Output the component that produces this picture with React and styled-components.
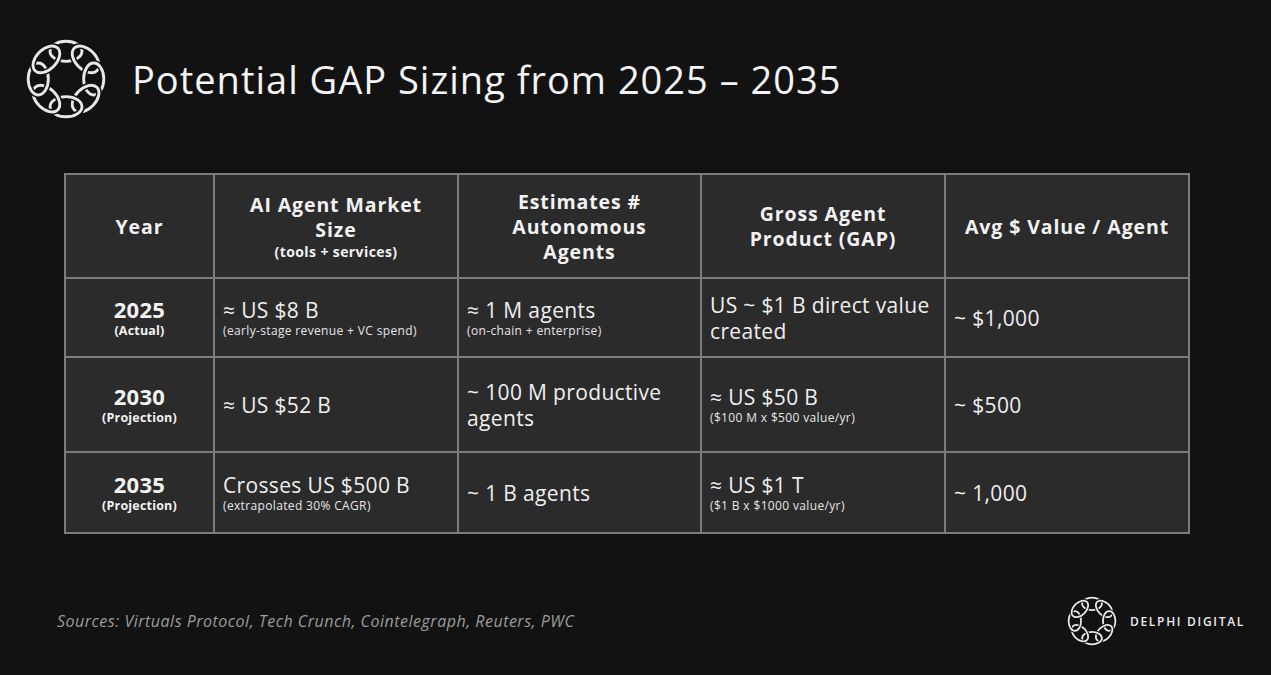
import React from "react"
import styled, { createGlobalStyle } from "styled-components"

const GlobalStyle = createGlobalStyle`
  html, body {
    margin: 0;
    padding: 0;
    background: #121212;
  }
  body {
    font-family: "Open Sans", "Liberation Sans", sans-serif;
    color: #f2f2f2;
  }
`

const headers = [
  { lines: ["Year"] },
  { lines: ["AI Agent Market", "Size"], sub: "(tools + services)" },
  { lines: ["Estimates #", "Autonomous", "Agents"] },
  { lines: ["Gross Agent", "Product (GAP)"] },
  { lines: ["Avg $ Value / Agent"] },
]

const rows = [
  {
    year: "2025",
    note: "(Actual)",
    market: "≈ US $8 B",
    marketSub: "(early-stage revenue + VC spend)",
    agents: "≈ 1 M agents",
    agentsSub: "(on-chain + enterprise)",
    gap: "US ~ $1 B direct value created",
    gapSub: null,
    avg: "~ $1,000",
    h: 77,
  },
  {
    year: "2030",
    note: "(Projection)",
    market: "≈ US $52 B",
    marketSub: null,
    agents: "~ 100 M productive agents",
    agentsSub: null,
    gap: "≈ US $50 B",
    gapSub: "($100 M x $500 value/yr)",
    avg: "~ $500",
    h: 93,
  },
  {
    year: "2035",
    note: "(Projection)",
    market: "Crosses US $500 B",
    marketSub: "(extrapolated 30% CAGR)",
    agents: "~ 1 B agents",
    agentsSub: null,
    gap: "≈ US $1 T",
    gapSub: "($1 B x $1000 value/yr)",
    avg: "~ 1,000",
    h: 79,
  },
]

// braided ring mark: 8 overlapping ovals laid round a circle
const Logo = ({ size }) => {
  const loops = Array.from({ length: 8 }, (_, i) => {
    const a = (i / 8) * Math.PI * 2 - Math.PI / 2
    return { x: 50 + Math.cos(a) * 33, y: 50 + Math.sin(a) * 33, a: (a * 180) / Math.PI }
  })
  return (
    <svg width={size} height={size} viewBox="0 0 100 100">
      {loops.map((l, i) => (
        <g key={i} transform={`rotate(${l.a + 90} ${l.x} ${l.y})`}>
          <ellipse cx={l.x} cy={l.y} rx="19" ry="12" fill="none" stroke="#121212" strokeWidth="7" />
          <ellipse cx={l.x} cy={l.y} rx="19" ry="12" fill="none" stroke="#e8e8e8" strokeWidth="3.4" />
        </g>
      ))}
    </svg>
  )
}

const App = () => {
  return (
    <>
      <GlobalStyle />
      <Page>
        <Header>
          <Logo size={84} />
          <Title>Potential GAP Sizing from 2025 – 2035</Title>
        </Header>

        <Table>
          {headers.map((h, i) => (
            <HeadCell key={i}>
              {h.lines.map(t => (
                <HeadLine key={t}>{t}</HeadLine>
              ))}
              {h.sub && <HeadSub>{h.sub}</HeadSub>}
            </HeadCell>
          ))}
          {rows.map(r => (
            <BodyRow key={r.year} $h={r.h}>
              <YearCell>
                <Year>{r.year}</Year>
                <YearNote>{r.note}</YearNote>
              </YearCell>
              <Cell>
                <Main>{r.market}</Main>
                {r.marketSub && <Sub>{r.marketSub}</Sub>}
              </Cell>
              <Cell>
                <Main>{r.agents}</Main>
                {r.agentsSub && <Sub>{r.agentsSub}</Sub>}
              </Cell>
              <Cell>
                <Main>{r.gap}</Main>
                {r.gapSub && <Sub>{r.gapSub}</Sub>}
              </Cell>
              <Cell>
                <Main>{r.avg}</Main>
              </Cell>
            </BodyRow>
          ))}
        </Table>

        <Footer>
          <Sources>Sources: Virtuals Protocol, Tech Crunch, Cointelegraph, Reuters, PWC</Sources>
          <Brand>
            <Logo size={52} />
            <BrandName>DELPHI DIGITAL</BrandName>
          </Brand>
        </Footer>
      </Page>
    </>
  )
}

const Page = styled.div`
  width: 1271px;
  height: 675px;
  box-sizing: border-box;
  display: flex;
  flex-direction: column;
  padding: 37px 26px 0 24px;
`

const Header = styled.div`
  display: flex;
  align-items: center;
  gap: 24px;
`

const Title = styled.h1`
  margin: 0;
  font-size: 38px;
  font-weight: 500;
  color: #f4f4f4;
  letter-spacing: 1px;
`

const Table = styled.div`
  margin: 52px 0 0 40px;
  width: 1126px;
  display: grid;
  grid-template-columns: 147px 242px 241px 242px 242px;
  background: #7c7c7c;
  gap: 2px;
  padding: 2px;
  box-sizing: border-box;
`

const BodyRow = styled.div`
  display: contents;
  & > div {
    height: ${p => p.$h}px;
  }
`

const HeadCell = styled.div`
  height: 102px;
  background: #2b2b2b;
  display: flex;
  flex-direction: column;
  align-items: center;
  justify-content: center;
  text-align: center;
  font-weight: 700;
  font-size: 19.5px;
  letter-spacing: 0.9px;
  line-height: 25px;
  padding: 0 4px;
  box-sizing: border-box;
  white-space: nowrap;
`

const HeadLine = styled.span``

const HeadSub = styled.span`
  font-size: 14px;
  letter-spacing: 0.4px;
  line-height: 19px;
`

const Cell = styled.div`
  background: #2b2b2b;
  display: flex;
  flex-direction: column;
  justify-content: center;
  padding: 0 8px;
  box-sizing: border-box;
`

const YearCell = styled(Cell)`
  align-items: center;
`

const Year = styled.div`
  font-size: 22px;
  font-weight: 700;
  line-height: 26px;
  letter-spacing: 0.3px;
`

const YearNote = styled.div`
  font-size: 12.5px;
  font-weight: 700;
  line-height: 17px;
  letter-spacing: 0.2px;
`

const Main = styled.div`
  font-size: 21px;
  line-height: 26px;
  letter-spacing: 0.35px;
  color: #efefef;
`

const Sub = styled.div`
  font-size: 12px;
  line-height: 16px;
  letter-spacing: 0.35px;
  color: #e6e6e6;
`

const Footer = styled.div`
  margin-top: auto;
  margin-bottom: 28px;
  display: flex;
  align-items: center;
  justify-content: space-between;
  padding-left: 33px;
`

const Sources = styled.div`
  font-style: italic;
  font-size: 16px;
  letter-spacing: 0.5px;
  color: #9c9c9c;
`

const Brand = styled.div`
  display: flex;
  align-items: center;
  gap: 12px;
`

const BrandName = styled.div`
  font-size: 12px;
  font-weight: 600;
  letter-spacing: 1.7px;
  color: #eaeaea;
`

export default App
